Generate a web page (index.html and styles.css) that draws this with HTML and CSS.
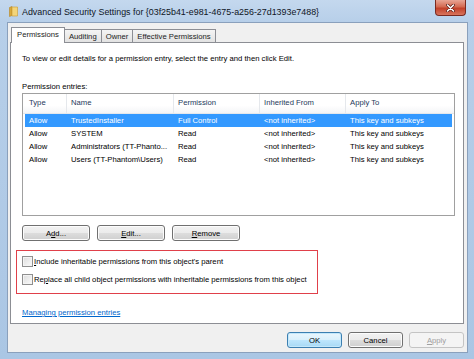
FILE: index.html
```html
<!DOCTYPE html>
<html lang="en">
<head>
    <meta charset="UTF-8">
    <title>Advanced Security Settings</title>
    <link rel="stylesheet" href="styles.css">
</head>
<body>
    <div class="window">
        <div class="titlebar">
            <svg class="folder" width="9" height="11" viewBox="0 0 9 11">
                <path d="M0.5 1.5 L3 0.5 L3 9.5 L0.5 10.5 Z" fill="#d9a93a" stroke="#b58524" stroke-width="0.6"/>
                <path d="M3 1 L8.5 1 L8.5 10 L3 10 Z" fill="#f3d57a" stroke="#c99b33" stroke-width="0.6"/>
            </svg>
            <span class="title">Advanced Security Settings for {03f25b41-e981-4675-a256-27d1393e7488}</span>
            <div class="close">
                <svg width="9" height="8" viewBox="0 0 9 8">
                    <path d="M1.5 1 L7.5 7 M7.5 1 L1.5 7" stroke="#5a1a14" stroke-width="3" stroke-linecap="round"/>
                    <path d="M1.5 1 L7.5 7 M7.5 1 L1.5 7" stroke="#ffffff" stroke-width="1.6" stroke-linecap="round"/>
                </svg>
            </div>
        </div>
        <div class="client">
            <div class="tabs">
                <div class="tab active">Permissions</div>
                <div class="tab">Auditing</div>
                <div class="tab">Owner</div>
                <div class="tab">Effective Permissions</div>
            </div>
            <div class="panel">
                <div class="intro">To view or edit details for a permission entry, select the entry and then click Edit.</div>
                <div class="label">Permission entries:</div>
                <div class="list">
                    <div class="row head">
                        <span class="c-type">Type</span>
                        <span class="c-name">Name</span>
                        <span class="c-perm">Permission</span>
                        <span class="c-inh">Inherited From</span>
                        <span class="c-apply">Apply To</span>
                    </div>
                    <div class="row selected">
                        <span class="c-type">Allow</span>
                        <span class="c-name">TrustedInstaller</span>
                        <span class="c-perm">Full Control</span>
                        <span class="c-inh">&lt;not inherited&gt;</span>
                        <span class="c-apply">This key and subkeys</span>
                    </div>
                    <div class="row">
                        <span class="c-type">Allow</span>
                        <span class="c-name">SYSTEM</span>
                        <span class="c-perm">Read</span>
                        <span class="c-inh">&lt;not inherited&gt;</span>
                        <span class="c-apply">This key and subkeys</span>
                    </div>
                    <div class="row">
                        <span class="c-type">Allow</span>
                        <span class="c-name">Administrators (TT-Phanto...</span>
                        <span class="c-perm">Read</span>
                        <span class="c-inh">&lt;not inherited&gt;</span>
                        <span class="c-apply">This key and subkeys</span>
                    </div>
                    <div class="row">
                        <span class="c-type">Allow</span>
                        <span class="c-name">Users (TT-Phantom\Users)</span>
                        <span class="c-perm">Read</span>
                        <span class="c-inh">&lt;not inherited&gt;</span>
                        <span class="c-apply">This key and subkeys</span>
                    </div>
                </div>
                <div class="list-buttons">
                    <button class="btn">A<u>d</u>d...</button>
                    <button class="btn"><u>E</u>dit...</button>
                    <button class="btn"><u>R</u>emove</button>
                </div>
                <div class="options">
                    <label class="check"><span class="box"></span><span><u>I</u>nclude inheritable permissions from this object's parent</span></label>
                    <label class="check"><span class="box"></span><span>Re<u>p</u>lace all child object permissions with inheritable permissions from this object</span></label>
                </div>
                <a class="help-link" href="#">Managing permission entries</a>
            </div>
            <div class="dialog-buttons">
                <button class="btn default">OK</button>
                <button class="btn">Cancel</button>
                <button class="btn disabled"><u>A</u>pply</button>
            </div>
        </div>
    </div>
</body>
</html>
```

FILE: styles.css
```css
body {
    margin: 0;
    font-family: "Liberation Sans", Arial, sans-serif;
    font-size: 7.7px;
    color: #000000;
}
.window {
    width: 474px;
    height: 359px;
    background: linear-gradient(to bottom, #c4d8ee 0px, #b7cfe9 22px, #aac6e4 100%);
    display: flex;
    flex-direction: column;
    overflow: hidden;
}
.titlebar {
    height: 22px;
    display: flex;
    align-items: center;
    position: relative;
    padding-left: 9px;
}
.folder {
    margin-right: 4px;
    margin-top: 1px;
}
.title {
    font-size: 8.9px;
    color: #10161f;
    margin-top: 2px;
}
.close {
    position: absolute;
    right: 8px;
    top: 0;
    width: 31px;
    height: 16px;
    border: 1px solid #7a2a20;
    border-top: none;
    border-radius: 0 0 4px 4px;
    background: linear-gradient(to bottom, #e8a595 0%, #d46a52 45%, #c2412a 55%, #d8745c 100%);
    display: flex;
    align-items: center;
    justify-content: center;
    box-sizing: border-box;
}
.client {
    flex: 1;
    margin: 0 6px 6px 7px;
    background: #f0f0f0;
    border: 1px solid #8aa0bc;
    box-sizing: border-box;
    display: flex;
    flex-direction: column;
    padding: 4px 3px 0 2px;
}
.tabs {
    display: flex;
    height: 15px;
    align-items: flex-end;
    padding-left: 3px;
    position: relative;
    z-index: 1;
}
.tab {
    height: 13px;
    line-height: 13px;
    padding: 0 4px;
    border: 1px solid #8c8e94;
    border-bottom: none;
    margin-right: -1px;
    background: linear-gradient(to bottom, #f4f4f4, #e2e2e2);
    box-sizing: border-box;
    color: #222222;
}
.tab.active {
    height: 16px;
    line-height: 14px;
    margin-left: -2px;
    margin-right: -1px;
    padding: 0 5px;
    background: #ffffff;
    margin-bottom: -1px;
    position: relative;
    z-index: 2;
}
.panel {
    height: 282px;
    width: 454px;
    box-sizing: border-box;
    background: #ffffff;
    border: 1px solid #8c8e94;
    padding: 10px 6px 0 11px;
    display: flex;
    flex-direction: column;
}
.intro {
    height: 11px;
    line-height: 11px;
}
.label {
    margin-top: 17px;
    height: 11px;
    line-height: 11px;
}
.list {
    margin-top: 1px;
    width: 433px;
    height: 123px;
    box-sizing: border-box;
    border: 1px solid #a0a0a0;
    padding: 0 2px;
}
.row {
    display: flex;
    height: 13px;
    line-height: 13px;
    white-space: nowrap;
}
.row.head {
    height: 19px;
    line-height: 18px;
    margin: 0 -2px;
    padding: 0 2px;
    background: linear-gradient(to bottom, #ffffff 0%, #ffffff 60%, #f4f5f7 100%);
    border-bottom: 1px solid #e5e8ec;
    color: #1e395b;
}
.row.head span {
    border-right: 1px solid #e5e8ec;
}
.row.selected {
    background: #3399ff;
    color: #ffffff;
}
.row span {
    box-sizing: border-box;
    padding-left: 4px;
    overflow: hidden;
}
.c-type { width: 42px; }
.c-name { width: 107px; }
.c-perm { width: 86px; }
.c-inh { width: 86px; }
.c-apply { width: 106px; }
.row.head .c-apply { border-right: none; }
.list-buttons {
    display: flex;
    gap: 7px;
    margin-top: 9px;
}
.btn {
    font-family: inherit;
    font-size: 7.7px;
    width: 68px;
    height: 16px;
    padding: 0;
    border: 1px solid #707070;
    border-radius: 3px;
    background: linear-gradient(to bottom, #f2f2f2 0%, #ebebeb 50%, #dddddd 51%, #cfcfcf 100%);
    color: #000000;
    box-shadow: inset 0 0 0 1px #fcfcfc;
}
.options {
    margin-top: 9px;
    margin-left: -6px;
    width: 302px;
    height: 44px;
    box-sizing: border-box;
    border: 1px solid #e0404a;
    padding: 5px 0 0 5px;
    display: flex;
    flex-direction: column;
    gap: 7px;
}
.check {
    display: flex;
    align-items: center;
    gap: 1px;
    height: 11px;
    white-space: nowrap;
}
.box {
    width: 11px;
    height: 11px;
    box-sizing: border-box;
    border: 1px solid #8f8f8f;
    background: linear-gradient(135deg, #dcdcdc, #fbfbfb);
    box-shadow: inset 0 0 0 1px #f4f4f4;
}
.help-link {
    margin-top: 13px;
    color: #0066cc;
    text-decoration: underline;
    height: 11px;
    line-height: 11px;
}
.dialog-buttons {
    display: flex;
    justify-content: flex-end;
    gap: 6px;
    margin-top: 8px;
    width: 454px;
}
.dialog-buttons .btn {
    width: 55px;
}
.btn.default {
    border-color: #3c7fb1;
    background: linear-gradient(to bottom, #eaf6fd 0%, #d9f0fc 50%, #bee6fd 51%, #a7d9f5 100%);
    box-shadow: inset 0 0 0 1px #c4e8fb;
}
.btn.disabled {
    border-color: #c4c4c4;
    background: #f4f4f4;
    color: #a0a0a0;
    box-shadow: none;
}
```
